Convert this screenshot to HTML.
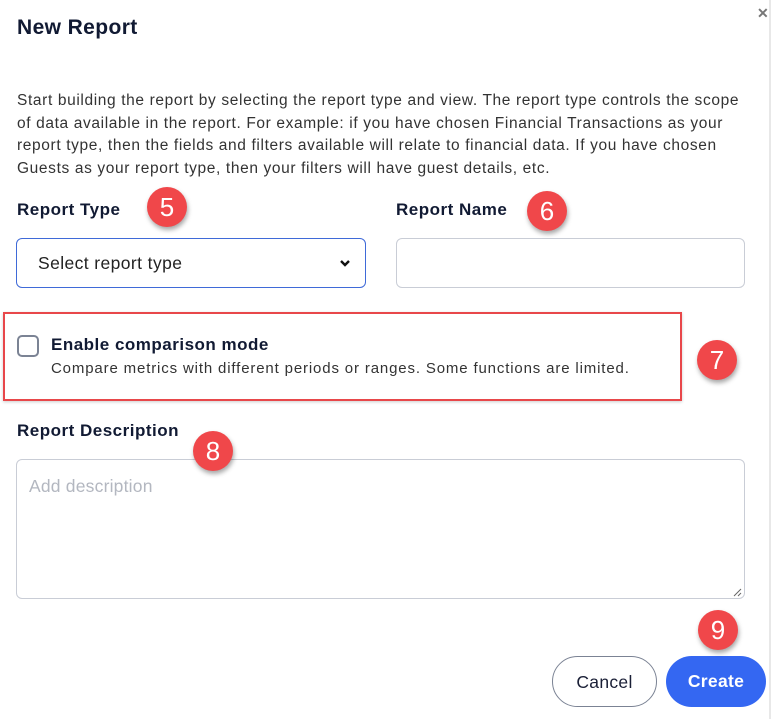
<!DOCTYPE html>
<html><head><style>
body{margin:0;width:771px;height:719px;background:#fff;font-family:"Liberation Sans",sans-serif;color:#1a1f36;position:relative;overflow:hidden}
.a{position:absolute}
.t{left:17px;top:16px;font-size:21px;font-weight:bold;color:#111a33;letter-spacing:0.4px}
.x{left:757px;top:5px;font-size:14px;color:#777;font-weight:bold}
.p{left:17px;top:90px;width:760px;font-size:15.5px;line-height:22.5px;color:#333;letter-spacing:0.63px;white-space:nowrap}
.l{font-size:17px;font-weight:bold;color:#111a33;letter-spacing:0.5px}
.in{border:1px solid #c9cdd6;border-radius:6px;box-sizing:border-box;background:#fff}
.b{width:40px;height:40px;border-radius:50%;background:#f0474a;color:#fff;font-size:26px;text-align:center;line-height:40px;box-shadow:1px 3px 5px rgba(0,0,0,.35)}
.btn{border-radius:26px;height:51px;font-size:17.5px;text-align:center;line-height:51px;box-sizing:border-box;letter-spacing:0.3px}
</style></head><body>
<div class="a t">New Report</div>
<div class="a x">✕</div>
<div class="a" style="left:769px;top:0;width:2px;height:719px;background:#e8e8e8"></div>
<div class="a p">Start building the report by selecting the report type and view. The report type controls the scope<br>of data available in the report. For example: if you have chosen Financial Transactions as your<br>report type, then the fields and filters available will relate to financial data. If you have chosen<br>Guests as your report type, then your filters will have guest details, etc.</div>
<div class="a l" style="left:17px;top:200px">Report Type</div>
<div class="a l" style="left:396px;top:200px">Report Name</div>
<div class="a in" style="left:16px;top:238px;width:350px;height:50px;border-color:#3f6ad8;font-size:17.5px;line-height:48px;padding-left:21px;color:#222;letter-spacing:0.4px">Select report type
<svg class="a" style="right:14px;top:20px" width="12" height="9" viewBox="0 0 12 9"><path d="M2 2l4 4 4-4" stroke="#111" stroke-width="2.4" fill="none"/></svg></div>
<div class="a in" style="left:396px;top:238px;width:349px;height:50px"></div>
<div class="a" style="left:3px;top:312px;width:679px;height:89px;border:2px solid #e8474a;box-sizing:border-box;box-shadow:0 1px 3px rgba(0,0,0,.2)"></div>
<div class="a" style="left:17px;top:335px;width:22px;height:22px;border:2px solid #7b8394;border-radius:5px;box-sizing:border-box"></div>
<div class="a l" style="left:51px;top:335px;font-size:17px">Enable comparison mode</div>
<div class="a" style="left:51px;top:360px;font-size:15px;color:#333;letter-spacing:0.85px;white-space:nowrap">Compare metrics with different periods or ranges. Some functions are limited.</div>
<div class="a l" style="left:17px;top:421px">Report Description</div>
<div class="a in" style="left:16px;top:459px;width:729px;height:140px;font-size:17.5px;color:#b3b7c0;padding:16px 12px;letter-spacing:0.2px">Add description</div>
<svg class="a" style="left:733px;top:588px" width="9" height="9"><path d="M1 8L8 1M5 8L8 5" stroke="#666" stroke-width="1"/></svg>
<div class="a btn" style="left:552px;top:656px;width:105px;border:1px solid #7b8394;color:#1a1f36">Cancel</div>
<div class="a btn" style="left:666px;top:656px;width:100px;background:#3467f2;color:#fff;font-weight:bold">Create</div>
<div class="a b" style="left:147px;top:187px">5</div>
<div class="a b" style="left:527px;top:191px">6</div>
<div class="a b" style="left:697px;top:340px">7</div>
<div class="a b" style="left:193px;top:431px">8</div>
<div class="a b" style="left:698px;top:610px">9</div>
</body></html>
